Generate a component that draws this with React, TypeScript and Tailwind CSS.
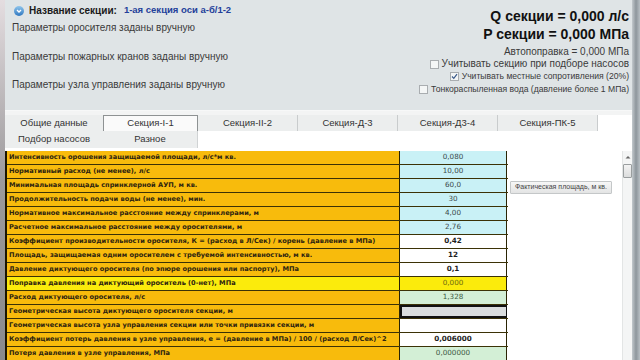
import React from "react";

type Row = {
  label: string;
  value: string;
  kind: "blue" | "white" | "yellow" | "green" | "gray" | "empty";
  bold?: boolean;
};

const rows: Row[] = [
  { label: "Интенсивность орошения защищаемой площади, л/с*м кв.", value: "0,080", kind: "blue" },
  { label: "Нормативный расход (не менее), л/с", value: "10,00", kind: "blue" },
  { label: "Минимальная площадь спринклерной АУП, м кв.", value: "60,0", kind: "blue" },
  { label: "Продолжительность подачи воды (не менее), мин.", value: "30", kind: "blue" },
  { label: "Нормативное максимальное расстояние между спринклерами, м", value: "4,00", kind: "blue" },
  { label: "Расчетное максимальное расстояние между оросителями, м", value: "2,76", kind: "blue" },
  { label: "Коэффициент производительности оросителя, К = (расход в Л/Сек) / корень (давление в МПа)", value: "0,42", kind: "white", bold: true },
  { label: "Площадь, защищаемая одним оросителем с требуемой интенсивностью, м кв.", value: "12", kind: "white", bold: true },
  { label: "Давление диктующего оросителя (по эпюре орошения или паспорту), МПа", value: "0,1", kind: "white", bold: true },
  { label: "Поправка давления на диктующий ороситель (0-нет), МПа", value: "0,000", kind: "yellow" },
  { label: "Расход диктующего оросителя, л/с", value: "1,328", kind: "green" },
  { label: "Геометрическая высота диктующего оросителя секции, м", value: "", kind: "gray" },
  { label: "Геометрическая высота узла управления секции или точки привязки секции, м", value: "", kind: "empty" },
  { label: "Коэффициент потерь давления в узле управления, е = (давление в МПа) / 100 / (расход Л/Сек)^2", value: "0,006000", kind: "white", bold: true },
  { label: "Потеря давления в узле управления, МПа", value: "0,000000", kind: "green" },
  { label: "", value: "", kind: "empty" },
];

function valueClass(kind: Row["kind"]) {
  switch (kind) {
    case "blue":
      return "bg-[#c9f1f6] text-[#3b4a4c]";
    case "white":
      return "bg-white text-[#1e1e1e]";
    case "yellow":
      return "bg-[#fbeb0c] text-[#6d6a10]";
    case "green":
      return "bg-[#d3efd6] text-[#3d5a44]";
    case "gray":
      return "bg-[#d9dcdd] border-2 border-[#111]";
    default:
      return "bg-white";
  }
}

function Checkbox({ checked }: { checked?: boolean }) {
  return (
    <span className="inline-flex w-[9px] h-[9px] border border-[#a9adb0] bg-[#f4f6f6] items-center justify-center mr-[3px] shrink-0">
      {checked && (
        <svg width="7" height="7" viewBox="0 0 7 7">
          <path d="M1 3.5 L2.8 5.3 L6 1.2" stroke="#3a5a8a" strokeWidth="1.2" fill="none" />
        </svg>
      )}
    </span>
  );
}

export default function App() {
  const ui = { fontFamily: '"Liberation Sans", Arial, sans-serif' };
  const cell = { fontFamily: '"DejaVu Sans", Verdana, sans-serif' };
  return (
    <div className="w-[640px] h-[360px] overflow-hidden flex bg-white" style={ui}>
      <div className="w-[5px] h-full bg-gradient-to-b from-[#e4dde0] via-[#9c9a9c] to-[#8a8a8c]" />
      <div className="flex-1 flex flex-col min-w-0">
        {/* top panel */}
        <div className="h-[110px] bg-[#dfe4e6] flex justify-between shrink-0">
          <div className="flex flex-col pl-[7px] pt-[4px]">
            <div className="flex items-center h-[13px]">
              <span className="w-[10px] h-[10px] rounded-full bg-gradient-to-b from-[#8fc6ec] to-[#2f78c0] flex items-center justify-center mr-[5px] ml-[2px]">
                <svg width="6" height="6" viewBox="0 0 6 6">
                  <path d="M1 2 L3 4 L5 2" stroke="white" strokeWidth="1.3" fill="none" />
                </svg>
              </span>
              <span className="font-bold text-[10px] text-[#1a1a1a]">Название секции:</span>
              <span className="font-bold text-[9.5px] text-[#23409a] ml-[7px]">1-ая секция оси а-б/1-2</span>
            </div>
            <div className="text-[10px] text-[#3a3a3a] mt-[4px] leading-[13px]">Параметры оросителя заданы вручную</div>
            <div className="text-[10px] text-[#3a3a3a] mt-[16px] leading-[13px]">Параметры пожарных кранов заданы вручную</div>
            <div className="text-[10px] text-[#3a3a3a] mt-[15px] leading-[13px]">Параметры узла управления заданы вручную</div>
          </div>
          <div className="flex flex-col items-end pr-[3px] pt-[7px]">
            <div className="font-bold text-[14px] leading-[18px] text-[#111]">Q секции = 0,000 л/с</div>
            <div className="font-bold text-[14px] leading-[18px] text-[#111]">P секции = 0,000 МПа</div>
            <div className="text-[10px] leading-[12px] text-[#3a3a3a] mt-[3px]">Автопоправка = 0,000 МПа</div>
            <div className="flex items-center text-[10px] leading-[12px] text-[#3a3a3a]">
              <Checkbox />Учитывать секцию при подборе насосов
            </div>
            <div className="flex items-center text-[8.6px] leading-[13px] text-[#3a3a3a]">
              <Checkbox checked />Учитывать местные сопротивления (20%)
            </div>
            <div className="flex items-center text-[8.6px] leading-[12px] text-[#3a3a3a]">
              <Checkbox />Тонкораспыленная вода (давление более 1 МПа)
            </div>
          </div>
        </div>

        {/* tabs */}
        <div className="bg-[#f3f4f4] pt-[4px] shrink-0 border-t border-[#f7f8f8]">
          <div className="flex h-[16px] text-[9.5px] text-[#333]">
            <div className="w-[98px] flex items-center justify-center bg-[#eceeee]">Общие данные</div>
            <div className="w-[95px] flex items-center justify-center bg-[#fafafa] border border-[#8e9293] border-b-0">Секция-I-1</div>
            <div className="w-[100px] flex items-center justify-center bg-[#eceeee] border-r border-[#c9cccd]">Секция-II-2</div>
            <div className="w-[100px] flex items-center justify-center bg-[#eceeee] border-r border-[#c9cccd]">Секция-Д-3</div>
            <div className="w-[100px] flex items-center justify-center bg-[#eceeee] border-r border-[#c9cccd]">Секция-Д3-4</div>
            <div className="w-[100px] flex items-center justify-center bg-[#eceeee] border-r border-[#c9cccd]">Секция-ПК-5</div>
            <div className="flex-1 bg-white" />
          </div>
          <div className="flex h-[17px] text-[9.5px] text-[#333] bg-white">
            <div className="w-[98px] flex items-center justify-center bg-[#eceeee]">Подбор насосов</div>
            <div className="w-[95px] flex items-center justify-center bg-[#eceeee] border-r border-[#d0d3d4]">Разное</div>
            <div className="flex-1 bg-white" />
          </div>
        </div>

        {/* table area */}
        <div className="flex flex-1 min-h-0 bg-white pt-[3px]">
          <div className="w-[503px] border-l-2 border-[#1a1400] shrink-0" style={cell}>
            {rows.map((r, i) => {
              const labelBg =
                r.kind === "yellow" ? "bg-[#fbeb0c]" : i === rows.length - 1 ? "bg-[#fbe27a]" : "bg-[#f8bb0c]";
              return (
                <div key={i} className="flex h-[14px] border-b border-[#3b3206]">
                  <div className={`w-[393px] ${labelBg} border-r border-[#2a2404] flex items-center pl-[2px] overflow-hidden whitespace-nowrap font-bold text-[6.6px] text-[#2e2410]`}>
                    {r.label}
                  </div>
                  <div className={`w-[107px] border-r border-[#2a2404] flex items-center justify-center text-[7.2px] ${r.bold ? "font-bold" : ""} ${valueClass(r.kind)}`}>
                    {r.value}
                  </div>
                </div>
              );
            })}
          </div>
          <div className="flex-1 relative">
            <div className="absolute left-[2px] top-[30px] h-[13px] px-[4px] flex items-center bg-gradient-to-b from-[#f7f7f7] to-[#e3e4e4] border border-[#c4c7c8] rounded-[1px] text-[7px] text-[#444] whitespace-nowrap">
              Фактическая площадь, м кв.
            </div>
          </div>
          <div className="w-[10px] bg-[#f4f5f5] border-l border-[#e3e5e5] flex flex-col items-center pt-[4px]">
            <svg width="6" height="4" viewBox="0 0 6 4">
              <path d="M0.5 3.5 L3 1 L5.5 3.5" fill="#666" />
            </svg>
            <div className="w-[9px] h-[14px] mt-[5px] bg-gradient-to-b from-[#f3f3f3] to-[#dcdddd] border border-[#9a9e9f] rounded-[1px]" />
          </div>
        </div>
      </div>
      <div className="w-[8px] h-full bg-gradient-to-r from-[#c3c9cd] via-[#8e969c] to-[#b8bfc4]" />
    </div>
  );
}
